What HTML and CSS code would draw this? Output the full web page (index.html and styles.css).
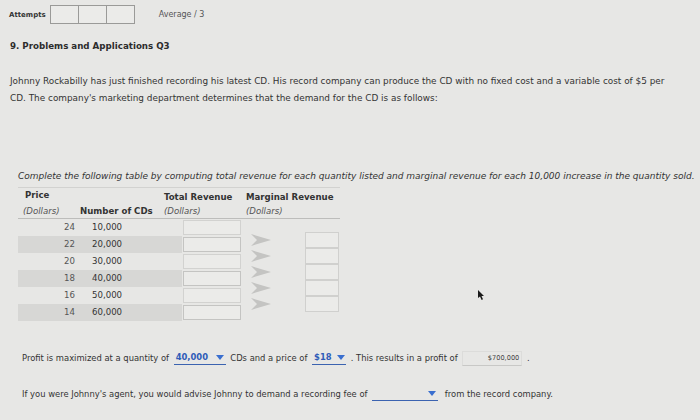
FILE: index.html
```html
<!DOCTYPE html>
<html>
<head>
<meta charset="utf-8">
<link rel="stylesheet" href="styles.css">
</head>
<body>
<div class="page">
  <div class="top">
    <span class="attempts">Attempts</span>
    <div class="boxes"><span class="box"></span><span class="box"></span><span class="box"></span></div>
    <span class="average">Average / 3</span>
  </div>
  <h1 class="title">9. Problems and Applications Q3</h1>
  <p class="intro">Johnny Rockabilly has just finished recording his latest CD. His record company can produce the CD with no fixed cost and a variable cost of $5 per CD. The company's marketing department determines that the demand for the CD is as follows:</p>
  <p class="instr">Complete the following table by computing total revenue for each quantity listed and marginal revenue for each 10,000 increase in the quantity sold.</p>

  <div class="table">
    <div class="thead">
      <div class="th c-price"><b>Price</b><i>(Dollars)</i></div>
      <div class="th c-qty"><b>Number of CDs</b></div>
      <div class="th c-tr"><b>Total Revenue</b><i>(Dollars)</i></div>
      <div class="th c-mr"><b>Marginal Revenue</b><i>(Dollars)</i></div>
    </div>
    <div class="tbody">
      <div class="rows">
        <div class="row"><span class="price">24</span><span class="qty">10,000</span><span class="tr"><span class="inp"></span></span></div>
        <div class="row band"><span class="price">22</span><span class="qty">20,000</span><span class="tr"><span class="inp"></span></span></div>
        <div class="row"><span class="price">20</span><span class="qty">30,000</span><span class="tr"><span class="inp"></span></span></div>
        <div class="row band"><span class="price">18</span><span class="qty">40,000</span><span class="tr"><span class="inp"></span></span></div>
        <div class="row"><span class="price">16</span><span class="qty">50,000</span><span class="tr"><span class="inp"></span></span></div>
        <div class="row band"><span class="price">14</span><span class="qty">60,000</span><span class="tr"><span class="inp"></span></span></div>
      </div>
      <div class="mrcol">
        <div class="mrrow"><svg class="chev" viewBox="0 0 22 14" width="22" height="14"><path d="M1 1 L21 7 L1 13 L7 7 Z" fill="#c4c4c2"/></svg><span class="mrinp"></span></div>
        <div class="mrrow"><svg class="chev" viewBox="0 0 22 14" width="22" height="14"><path d="M1 1 L21 7 L1 13 L7 7 Z" fill="#c4c4c2"/></svg><span class="mrinp"></span></div>
        <div class="mrrow"><svg class="chev" viewBox="0 0 22 14" width="22" height="14"><path d="M1 1 L21 7 L1 13 L7 7 Z" fill="#c4c4c2"/></svg><span class="mrinp"></span></div>
        <div class="mrrow"><svg class="chev" viewBox="0 0 22 14" width="22" height="14"><path d="M1 1 L21 7 L1 13 L7 7 Z" fill="#c4c4c2"/></svg><span class="mrinp"></span></div>
        <div class="mrrow"><svg class="chev" viewBox="0 0 22 14" width="22" height="14"><path d="M1 1 L21 7 L1 13 L7 7 Z" fill="#c4c4c2"/></svg><span class="mrinp"></span></div>
      </div>
    </div>
  </div>

  <p class="line profit">Profit is maximized at a quantity of <span class="dd w-qty"><span class="val">40,000</span><span class="tri"></span></span> CDs and a price of <span class="dd w-price"><span class="val">$18</span><span class="tri"></span></span> . This results in a profit of <span class="answer">$700,000</span> .</p>
  <p class="line agent">If you were Johnny's agent, you would advise Johnny to demand a recording fee of <span class="dd w-fee"><span class="val"></span><span class="tri"></span></span> from the record company.</p>

  <svg class="cursor" viewBox="0 0 8 12" width="8" height="12"><path d="M1 1 L1 9 L3 7.5 L4.6 11 L6 10.3 L4.5 7 L7 7 Z" fill="#1a1a1a"/></svg>
</div>
</body>
</html>
```

FILE: styles.css
```css
html, body {
  margin: 0;
  padding: 0;
}
body {
  background: #e7e7e5;
  font-family: "DejaVu Sans", Verdana, sans-serif;
  color: #2f2f2f;
  width: 700px;
  height: 420px;
  overflow: hidden;
}
.page {
  position: relative;
  width: 700px;
  height: 420px;
}
.top {
  display: flex;
  align-items: center;
  height: 19px;
  padding-top: 5px;
  padding-left: 9px;
  font-size: 7px;
}
.attempts {
  font-weight: bold;
  color: #333;
}
.boxes {
  display: flex;
  margin-left: 4px;
  border: 1px solid #9a9a98;
  height: 17px;
}
.box {
  width: 27px;
  height: 17px;
  border-right: 1px solid #9a9a98;
  background: #ebebe9;
}
.box:last-child { border-right: none; }
.average {
  margin-left: 24px;
  color: #555;
  font-size: 8px;
}
.title {
  margin: 17px 0 0 10px;
  font-size: 8.7px;
  font-weight: bold;
  color: #2c2c2c;
}
.intro {
  margin: 22px 0 0 10px;
  width: 662px;
  font-size: 8.9px;
  line-height: 17px;
  color: #333;
}
.instr {
  margin: 64px 0 0 18px;
  font-size: 9px;
  font-style: italic;
  color: #333;
  white-space: nowrap;
}
.table {
  margin: 6px 0 0 18px;
  width: 322px;
  border-top: 1px solid #d2d2d0;
  font-size: 8.6px;
}
.thead {
  display: flex;
  height: 30px;
  border-bottom: 1px solid #bdbdbb;
}
.th {
  display: flex;
  flex-direction: column;
  justify-content: flex-end;
  line-height: 14px;
}
.th b { color: #333; }
.th i { color: #555; }
.c-price { width: 62px; padding-left: 5px; box-sizing: border-box; justify-content: space-between; padding-top: 0; }
.c-price b { padding-left: 2px; }
.c-qty { width: 84px; }
.c-tr { width: 82px; }
.c-mr { width: 94px; }
.tbody {
  display: flex;
}
.rows {
  width: 230px;
}
.row {
  display: flex;
  align-items: center;
  height: 17px;
}
.price {
  width: 57px;
  text-align: right;
  color: #555;
}
.qty {
  width: 107px;
  padding-left: 17px;
  box-sizing: border-box;
  height: 17px;
  line-height: 17px;
  color: #333;
}
.row .price { height: 17px; line-height: 17px; }
.band .price, .band .qty { background: #d7d7d5; }
.tr {
  width: 66px;
  display: flex;
  align-items: center;
  height: 17px;
}
.inp {
  display: block;
  width: 56px;
  height: 13px;
  margin-left: 1px;
  border: 1px solid #d2d2d0;
  background: #ebebe9;
}
.band .inp { border-color: #c4c4c2; }
.mrcol {
  padding-top: 13px;
  display: flex;
  flex-direction: column;
}
.mrrow {
  display: flex;
  align-items: center;
  height: 16px;
}
.chev {
  display: block;
  margin-left: 2px;
}
.mrinp {
  display: block;
  margin-left: 33px;
  width: 32px;
  height: 14px;
  border: 1px solid #d0d0ce;
  background: #ebebe9;
}
.line {
  margin: 0 0 0 22px;
  font-size: 8.4px;
  color: #333;
  display: flex;
  align-items: center;
  white-space: pre;
}
.profit {
  margin-top: 30px;
  height: 14px;
}
.agent {
  margin-top: 22px;
  height: 14px;
}
.dd {
  display: inline-flex;
  align-items: center;
  justify-content: space-between;
  border-bottom: 1px solid #3b63b0;
  height: 11px;
  padding: 0 2px 1px 2px;
  margin: 0 2px;
}
.val {
  color: #2f5cb8;
  font-weight: bold;
}
.tri {
  width: 0;
  height: 0;
  border-left: 4px solid transparent;
  border-right: 4px solid transparent;
  border-top: 5px solid #3a6fcf;
  margin-left: 5px;
}
.w-qty { width: 48px; }
.w-price { width: 30px; }
.w-fee { width: 62px; margin-left: 2px; margin-right: 4px; }
.answer {
  display: inline-block;
  width: 56px;
  height: 13px;
  line-height: 13px;
  text-align: right;
  font-size: 6.6px;
  color: #444;
  border: 1px solid #dcdcda;
  border-bottom-color: #c8c8c6;
  margin: 0 2px;
  padding-right: 2px;
}
.cursor {
  position: absolute;
  left: 477px;
  top: 289px;
}
```
